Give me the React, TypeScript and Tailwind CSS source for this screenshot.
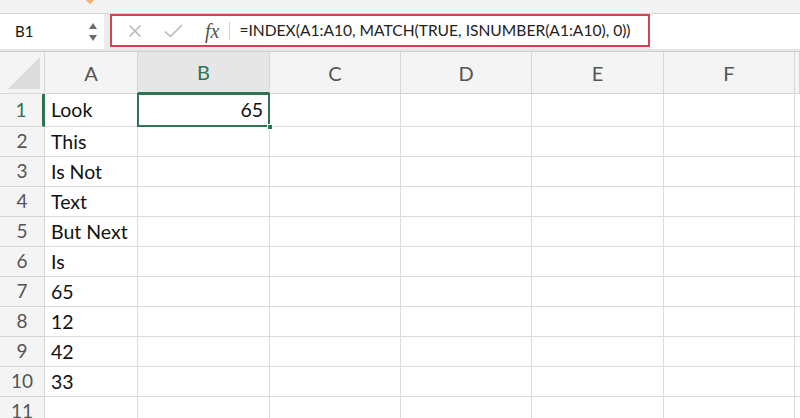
import React from 'react';

const cols = ['A', 'B', 'C', 'D', 'E', 'F', 'G'];
const colA = ['Look', 'This', 'Is Not', 'Text', 'But Next', 'Is', '65', '12', '42', '33', ''];

function XIcon() {
  return (
    <svg width="14" height="14" viewBox="0 0 14 14" fill="none" stroke="#b9b9b9" strokeWidth="1.6">
      <path d="M1.5 1.5 L12.5 12.5 M12.5 1.5 L1.5 12.5" />
    </svg>
  );
}

function CheckIcon() {
  return (
    <svg width="19" height="14" viewBox="0 0 19 14" fill="none" stroke="#b9b9b9" strokeWidth="1.6">
      <path d="M1 7.5 L6.5 12.5 L18 1" />
    </svg>
  );
}

function StepArrows() {
  return (
    <svg width="10" height="20" viewBox="0 0 10 20" fill="#6b6b6b">
      <path d="M5 1 L9 7 L1 7 Z" />
      <path d="M5 19 L9 13 L1 13 Z" />
    </svg>
  );
}

export default function App() {
  return (
    <div className="w-[800px] h-[418px] overflow-hidden bg-white text-[#111]" style={{ fontFamily: 'Lato, "Open Sans", sans-serif' }}>
      {/* ribbon remnant */}
      <div className="relative h-[14px] bg-[#f3f3f3] border-b border-[#d6d6d6]">
        <div className="absolute left-[87px] top-[-3px] w-[6px] h-[6px] rotate-45 bg-[#f0b27a]" />
      </div>

      {/* formula bar */}
      <div className="flex h-[35px] bg-[#ececec]">
        <div className="flex w-[104px] items-center justify-between bg-white pl-[15px] pr-[6px]">
          <span className="text-[15px]">B1</span>
          <StepArrows />
        </div>
        <div className="ml-[6px] flex h-[33px] w-[540px] items-center border-2 border-[#d4444f] bg-white">
          <div className="ml-[16px]"><XIcon /></div>
          <div className="ml-[22px]"><CheckIcon /></div>
          <span className="ml-[22px] text-[20px] italic text-[#555]" style={{ fontFamily: '"Liberation Serif", serif' }}>fx</span>
          <div className="ml-[10px] h-[18px] w-px bg-[#d0d0d0]" />
          <span className="ml-[9px] text-[15.6px] text-[#222]">=INDEX(A1:A10, MATCH(TRUE, ISNUMBER(A1:A10), 0))</span>
        </div>
        <div className="flex-1 bg-white" />
      </div>
      <div className="h-[3px] bg-[#e6e6e6] border-b border-[#d0d0d0]" />

      {/* grid */}
      <div className="grid grid-cols-[45px_93px_132px_131px_131px_132px_131px_1fr] grid-rows-[42px_33px_repeat(10,30px)] text-[19.5px]">
        <div className="relative bg-[#f4f4f4] border-r border-b border-[#d6d6d6]">
          <svg className="absolute right-[4px] bottom-[4px]" width="32" height="32" viewBox="0 0 32 32">
            <path d="M32 0 L32 32 L0 32 Z" fill="#dcdcdc" />
          </svg>
        </div>
        {cols.map((c) => (
          <div
            key={c}
            className={
              c === 'B'
                ? 'flex items-center justify-center bg-[#e6e6e6] border-r border-b-2 border-[#d6d6d6] border-b-[#2f7452] text-[20px] text-[#2f7452]'
                : 'flex items-center justify-center bg-[#f4f4f4] border-r border-b border-[#d6d6d6] text-[20px] text-[#555]'
            }
          >
            {c === 'G' ? '' : c}
          </div>
        ))}

        {colA.map((v, i) => {
          const row = i + 1;
          return (
            <React.Fragment key={row}>
              <div
                className={
                  row === 1
                    ? 'flex items-center justify-center bg-[#f4f4f4] border-r-[3px] border-b border-[#d6d6d6] border-r-[#2f7452] text-[19px] text-[#2f7452]'
                    : 'flex items-center justify-center bg-[#f4f4f4] border-r border-b border-[#d6d6d6] text-[19px] text-[#555]'
                }
              >
                {row}
              </div>
              <div className="flex items-center pl-[6px] border-r border-b border-[#dcdcdc]">{v}</div>
              {row === 1 ? (
                <div className="relative flex items-center justify-end pr-[6px] border-r border-b border-[#dcdcdc]">
                  65
                  <div className="absolute inset-[-1px] border-2 border-[#2f7452]" />
                  <div className="absolute right-[-4px] bottom-[-4px] w-[6px] h-[6px] bg-[#2f7452] border border-white" />
                </div>
              ) : (
                <div className="border-r border-b border-[#dcdcdc]" />
              )}
              <div className="border-r border-b border-[#dcdcdc]" />
              <div className="border-r border-b border-[#dcdcdc]" />
              <div className="border-r border-b border-[#dcdcdc]" />
              <div className="border-r border-b border-[#dcdcdc]" />
              <div className="border-b border-[#dcdcdc]" />
            </React.Fragment>
          );
        })}
      </div>
    </div>
  );
}
